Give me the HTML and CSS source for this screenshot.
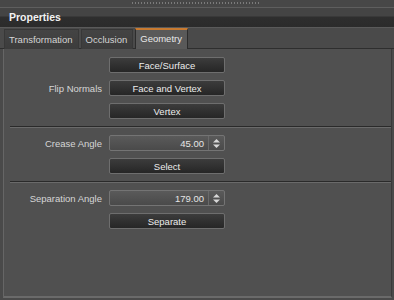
FILE: index.html
```html
<!DOCTYPE html>
<html>
  <head>
    <title>Properties</title>
    <link rel="stylesheet" href="styles.css">
  </head>
  <body>
    <div class="window">
      <div class="grip-bar"><div class="grip"></div></div>
      <div class="title-bar">Properties</div>
      <div class="tabs">
        <div class="tab">Transformation</div>
        <div class="tab">Occlusion</div>
        <div class="tab active">Geometry</div>
      </div>
      <div class="panel">
        <div class="group">
          <div class="row">
            <span class="label"></span>
            <button class="btn">Face/Surface</button>
          </div>
          <div class="row">
            <span class="label">Flip Normals</span>
            <button class="btn">Face and Vertex</button>
          </div>
          <div class="row">
            <span class="label"></span>
            <button class="btn">Vertex</button>
          </div>
        </div>
        <hr class="sep" />
        <div class="group">
          <div class="row">
            <span class="label">Crease Angle</span>
            <div class="spin">
              <span class="spin-value">45.00</span>
              <span class="spin-arrows">
                <svg width="9" height="11" viewBox="0 0 9 11">
                  <path d="M1 4.5 L4.5 1 L8 4.5 Z" fill="#d8d8d8" />
                  <path d="M1 6.5 L4.5 10 L8 6.5 Z" fill="#d8d8d8" />
                </svg>
              </span>
            </div>
          </div>
          <div class="row">
            <span class="label"></span>
            <button class="btn">Select</button>
          </div>
        </div>
        <hr class="sep" />
        <div class="group">
          <div class="row">
            <span class="label">Separation Angle</span>
            <div class="spin">
              <span class="spin-value">179.00</span>
              <span class="spin-arrows">
                <svg width="9" height="11" viewBox="0 0 9 11">
                  <path d="M1 4.5 L4.5 1 L8 4.5 Z" fill="#d8d8d8" />
                  <path d="M1 6.5 L4.5 10 L8 6.5 Z" fill="#d8d8d8" />
                </svg>
              </span>
            </div>
          </div>
          <div class="row">
            <span class="label"></span>
            <button class="btn">Separate</button>
          </div>
        </div>
      </div>
    </div>
  </body>
</html>
```

FILE: styles.css
```css
body {
  margin: 0;
  background-color: #484848;
  font-family: "Liberation Sans", Arial, sans-serif;
  font-size: 9.5px;
  color: #dcdcdc;
}

.window {
  width: 394px;
  height: 300px;
  display: flex;
  flex-direction: column;
  background-color: #4a4a4a;
}

.grip-bar {
  height: 7px;
  background-color: #474747;
  border-bottom: 1px solid #5e5e5e;
}

.grip {
  margin-left: 132px;
  margin-top: 2px;
  width: 128px;
  height: 2px;
  background-image: repeating-linear-gradient(90deg, #7a7a7a 0 1px, transparent 1px 3px);
}

.title-bar {
  height: 19px;
  line-height: 19px;
  padding-left: 9px;
  font-size: 10.5px;
  font-weight: bold;
  color: #f2f2f2;
  background: linear-gradient(#444444 0, #444444 8px, #2e2e2e 9px, #2b2b2b 100%);
  border-bottom: 1px solid #5a5a5a;
}

.tabs {
  display: flex;
  height: 20px;
  padding-left: 4px;
  border-bottom: 1px solid #2e2e2e;
}

.tab {
  height: 19px;
  line-height: 20px;
  padding: 0 5px 0 4px;
  margin-top: 1px;
  margin-right: 2px;
  background: linear-gradient(#444444, #3c3c3c);
  border: 1px solid #383838;
  border-bottom: none;
  color: #d4d4d4;
}

.tab.active {
  height: 21px;
  margin-top: 0;
  margin-bottom: -2px;
  line-height: 18px;
  background: #595959;
  border: 1px solid #2c2c2c;
  border-top: 2px solid #c87a30;
  border-bottom: none;
  color: #e8e8e8;
}

.panel {
  flex: 1;
  margin: 0 2px 2px 3px;
  padding-top: 8px;
  background-color: #505050;
  border-left: 1px solid #666666;
  border-right: 1px solid #3a3a3a;
  border-bottom: 2px solid #6a6a6a;
}

.group {
  display: flex;
  flex-direction: column;
  gap: 7px;
}

.row {
  display: flex;
  align-items: center;
  gap: 7px;
}

.label {
  width: 98px;
  text-align: right;
  color: #d6d6d6;
}

.btn {
  width: 116px;
  height: 16px;
  padding: 0;
  font-family: "Liberation Sans", Arial, sans-serif;
  font-size: 9.5px;
  color: #ececec;
  background: linear-gradient(#3c3c3c, #262626);
  border: 1px solid #6e6e6e;
  border-radius: 2px;
}

.spin {
  width: 116px;
  height: 16px;
  box-sizing: border-box;
  display: flex;
  align-items: center;
  background: linear-gradient(#5a5a5a, #4a4a4a);
  border: 1px solid #747474;
  border-radius: 2px;
}

.spin-value {
  flex: 1;
  text-align: right;
  padding-right: 4px;
  color: #e6e6e6;
}

.spin-arrows {
  width: 15px;
  height: 14px;
  display: flex;
  align-items: center;
  justify-content: center;
  border-left: 1px solid #6a6a6a;
}

.sep {
  margin: 7px 0 7px 6px;
  height: 0;
  border: none;
  border-top: 1px solid #2a2a2a;
  border-bottom: 1px solid #6a6a6a;
}
```
